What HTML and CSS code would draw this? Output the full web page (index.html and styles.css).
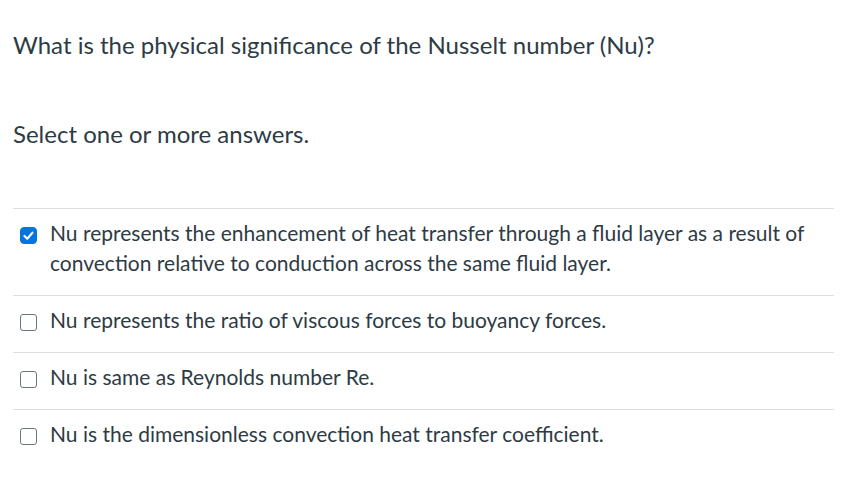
FILE: index.html
```html
<!DOCTYPE html>
<html>
<head>
<meta charset="utf-8">
<link rel="stylesheet" href="styles.css">
</head>
<body>
<div class="quiz">
  <h1 class="question">What is the physical significance of the Nusselt number (Nu)?</h1>
  <p class="prompt">Select one or more answers.</p>
  <ul class="answers">
    <li class="answer">
      <span class="box checked"><svg viewBox="0 0 16 16" width="13" height="13"><path d="M3 8.5 L6.5 12 L13 4.5" fill="none" stroke="#fff" stroke-width="2.6" stroke-linecap="round" stroke-linejoin="round"/></svg></span>
      <span class="label">Nu represents the enhancement of heat transfer through a fluid layer as a result of convection relative to conduction across the same fluid layer.</span>
    </li>
    <li class="answer">
      <span class="box"></span>
      <span class="label">Nu represents the ratio of viscous forces to buoyancy forces.</span>
    </li>
    <li class="answer">
      <span class="box"></span>
      <span class="label">Nu is same as Reynolds number Re.</span>
    </li>
    <li class="answer">
      <span class="box"></span>
      <span class="label">Nu is the dimensionless convection heat transfer coefficient.</span>
    </li>
  </ul>
</div>
</body>
</html>
```

FILE: styles.css
```css
html, body {
  margin: 0;
  padding: 0;
  background: #ffffff;
}
body {
  font-family: Lato, "Open Sans", sans-serif;
  color: #2d3b45;
}
.quiz {
  padding: 0 21px 0 13px;
}
.question {
  margin: 0;
  padding-top: 31px;
  font-size: 24px;
  font-weight: 400;
  line-height: 28px;
}
.prompt {
  margin: 61px 0 0 0;
  font-size: 24px;
  line-height: 28px;
}
.answers {
  list-style: none;
  margin: 60px 0 0 0;
  padding: 0;
}
.answer {
  display: flex;
  align-items: flex-start;
  gap: 13px;
  border-top: 1px solid #dcdfe2;
  padding: 9px 0 17px 7px;
  font-size: 21px;
  line-height: 30px;
}
.box {
  flex: none;
  box-sizing: border-box;
  width: 17px;
  height: 17px;
  margin-top: 9px;
  border: 1.5px solid #6b7780;
  border-radius: 3px;
  display: flex;
  align-items: center;
  justify-content: center;
}
.box.checked {
  background: #0374e0;
  border-color: #0374e0;
  border-radius: 4px;
}
```
